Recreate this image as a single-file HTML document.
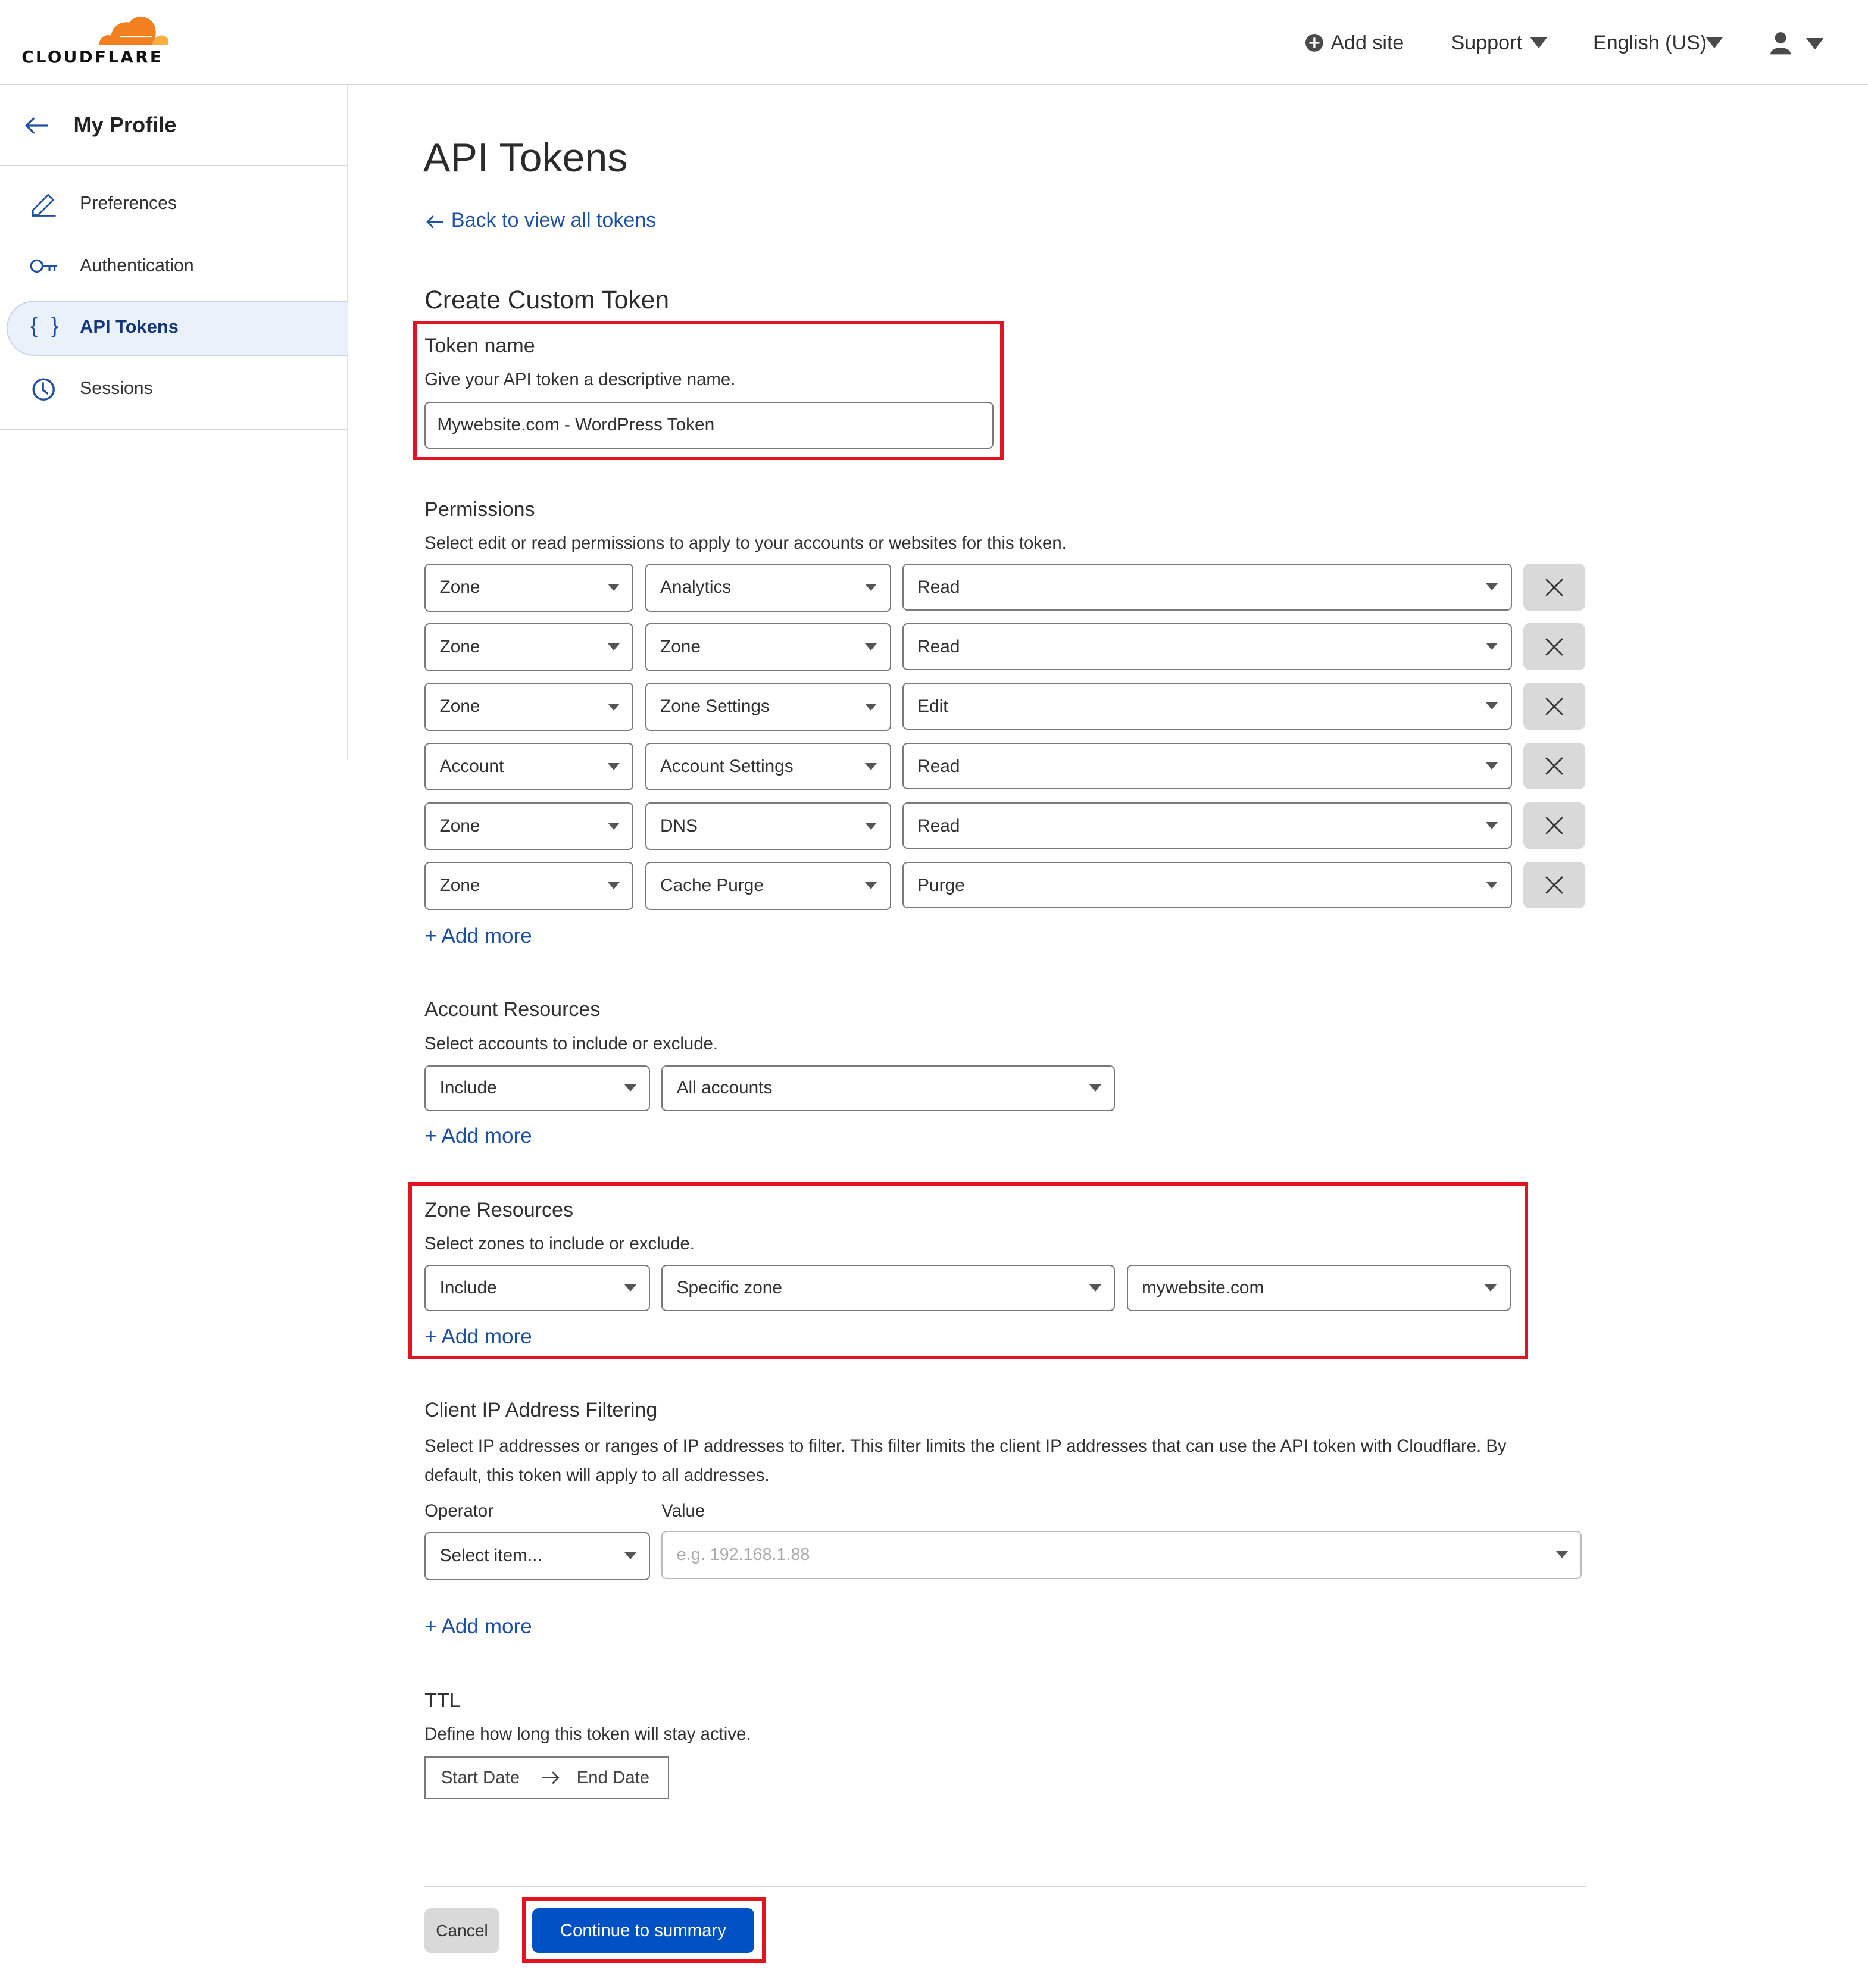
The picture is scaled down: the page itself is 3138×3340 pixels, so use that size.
<!DOCTYPE html>
<html><head><meta charset="utf-8"><style>
html,body{margin:0;padding:0;background:#fff}
body{width:3138px;height:3339px;overflow:hidden;position:relative}
#r{position:absolute;left:0;top:1px;width:1474px;height:1568px;zoom:2.12890;font-family:"Liberation Sans",sans-serif;color:#313131}
.t{position:absolute;white-space:nowrap;line-height:20px}
.box{position:absolute;box-sizing:border-box}
.sel{position:absolute;box-sizing:border-box;border:1px solid #7a7a7a;border-radius:4px;background:#fff;font-size:14px;color:#313131;line-height:36px;padding-left:11px;white-space:nowrap}
.sel::after{content:"";position:absolute;right:10px;top:50%;margin-top:-3px;border-left:5px solid transparent;border-right:5px solid transparent;border-top:6px solid #555}
.sel.nc::after{display:none}
.x{position:absolute;width:49px;height:37px;background:#d9d9d9;border-radius:5px}
.x svg{position:absolute;left:17px;top:11px}
.red{position:absolute;box-sizing:border-box;border:3px solid #e3141f}
.lbl{font-size:16px;color:#313131}
.desc{font-size:13.8px;color:#313131}
.add{font-size:16.5px;color:#1d4fa3}
</style></head><body><div id="r">

<!-- header -->
<svg class="box" style="left:74px;top:9px" width="60" height="28" viewBox="0 0 58 26">
<path d="M4 24 C4 18 9 16 13 17 C14 10 20 6 27 7 C31 1 42 1 46 9 C48 14 47 19 45 24 Z" fill="#f38020"/>
<path d="M44 24 C46 17 52 15 56 19 C57 21 57 23 56 24 Z" fill="#faae40"/>
<path d="M20 18 H44" stroke="#fff" stroke-width="1.2"/>
</svg>
<div class="t" style="left:17px;top:34px;font-size:13px;font-weight:bold;letter-spacing:1.6px;color:#111;font-family:'DejaVu Sans',sans-serif">CLOUDFLARE</div>

<svg class="box" style="left:1030px;top:26px" width="14" height="14"><circle cx="7" cy="7" r="7" fill="#4a4a4a"/><path d="M7 3v8M3 7h8" stroke="#fff" stroke-width="1.6"/></svg>
<div class="t" style="left:1050px;top:23px;font-size:16px">Add site</div>
<div class="t" style="left:1145px;top:23px;font-size:16px">Support</div>
<svg class="box" style="left:1207px;top:28px" width="14" height="10"><path d="M0 0h14L7 9z" fill="#4a4a4a"/></svg>
<div class="t" style="left:1257px;top:23px;font-size:16px">English (US)</div>
<svg class="box" style="left:1346px;top:28px" width="14" height="10"><path d="M0 0h14L7 9z" fill="#4a4a4a"/></svg>
<svg class="box" style="left:1396px;top:24px" width="18" height="19"><circle cx="9" cy="5" r="4.5" fill="#4a4a4a"/><path d="M1 18 C1 11 17 11 17 18Z" fill="#4a4a4a"/></svg>
<svg class="box" style="left:1425px;top:29px" width="14" height="10"><path d="M0 0h14L7 9z" fill="#4a4a4a"/></svg>
<div class="box" style="left:0;top:65px;width:1474px;height:1px;background:#d5d5d5"></div>

<!-- sidebar -->
<div class="box" style="left:274px;top:66px;width:1px;height:533px;background:#e0e0e0"></div>
<svg class="box" style="left:19px;top:90px" width="20" height="16"><path d="M19 8H2M8 2L2 8l6 6" stroke="#1d4fa3" stroke-width="1.5" fill="none"/></svg>
<div class="t" style="left:58px;top:88px;font-size:17px;font-weight:bold;color:#222">My Profile</div>
<div class="box" style="left:0;top:129px;width:274px;height:1px;background:#d5d5d5"></div>
<svg class="box" style="left:24px;top:150px" width="22" height="20"><path d="M2 15 L14 3 L18 7 L6 19 H2Z" stroke="#1d4fa3" stroke-width="1.3" fill="none"/><path d="M1 19.5H20" stroke="#1d4fa3" stroke-width="1.3"/></svg>
<div class="t" style="left:63px;top:150px;font-size:14.2px">Preferences</div>
<svg class="box" style="left:23px;top:202px" width="24" height="14"><circle cx="6" cy="7" r="4.5" stroke="#1d4fa3" stroke-width="1.5" fill="none"/><path d="M10.5 7H22M16 7v4M20 7v4" stroke="#1d4fa3" stroke-width="1.5"/></svg>
<div class="t" style="left:63px;top:199px;font-size:14.2px">Authentication</div>
<div class="box" style="left:5px;top:236px;width:270px;height:44px;background:#eaf1fb;border:1px solid #c8d6ea;border-right:none;border-radius:22px 0 0 22px"></div>
<div class="t" style="left:24px;top:246px;font-size:17px;color:#1d4fa3;letter-spacing:3px">{ }</div>
<div class="t" style="left:63px;top:247px;font-size:14.5px;font-weight:bold;color:#14367a">API Tokens</div>
<svg class="box" style="left:25px;top:297px" width="19" height="19"><circle cx="9.5" cy="9.5" r="8" stroke="#1d4fa3" stroke-width="1.6" fill="none"/><path d="M9 4v6l4 3" stroke="#1d4fa3" stroke-width="1.6" fill="none"/></svg>
<div class="t" style="left:63px;top:296px;font-size:14.2px">Sessions</div>
<div class="box" style="left:0;top:337px;width:274px;height:1px;background:#d5d5d5"></div>

<!-- main -->
<div class="t" style="left:334px;top:102px;font-size:32px;line-height:44px;color:#2b2b2b">API Tokens</div>
<svg class="box" style="left:336px;top:168px" width="15" height="12"><path d="M14 6H2M6 1.5L1.5 6 6 10.5" stroke="#1d4fa3" stroke-width="1.3" fill="none"/></svg>
<div class="t" style="left:356px;top:163px;font-size:16px;color:#1d4fa3">Back to view all tokens</div>
<div class="t" style="left:335px;top:224px;font-size:20px;line-height:24px;color:#2b2b2b">Create Custom Token</div>

<div class="red" style="left:326px;top:252px;width:466px;height:110px"></div>
<div class="t lbl" style="left:335px;top:262px">Token name</div>
<div class="t desc" style="left:335px;top:289px">Give your API token a descriptive name.</div>
<div class="sel nc" style="left:335px;top:316px;width:449px;height:37px;line-height:35px;padding-left:9px">Mywebsite.com - WordPress Token</div>

<div class="t lbl" style="left:335px;top:391px">Permissions</div>
<div class="t desc" style="left:335px;top:418px">Select edit or read permissions to apply to your accounts or websites for this token.</div>

<div class="sel" style="left:335px;top:444px;width:165px;height:38px">Zone</div>
<div class="sel" style="left:509px;top:444px;width:194px;height:38px">Analytics</div>
<div class="sel" style="left:712px;top:444px;width:481px;height:37px">Read</div>
<div class="x" style="left:1202px;top:444px"><svg width="15" height="15"><path d="M1 1l13 13M14 1L1 14" stroke="#333" stroke-width="1.3"/></svg></div>

<div class="sel" style="left:335px;top:491px;width:165px;height:38px">Zone</div>
<div class="sel" style="left:509px;top:491px;width:194px;height:38px">Zone</div>
<div class="sel" style="left:712px;top:491px;width:481px;height:37px">Read</div>
<div class="x" style="left:1202px;top:491px"><svg width="15" height="15"><path d="M1 1l13 13M14 1L1 14" stroke="#333" stroke-width="1.3"/></svg></div>

<div class="sel" style="left:335px;top:538px;width:165px;height:38px">Zone</div>
<div class="sel" style="left:509px;top:538px;width:194px;height:38px">Zone Settings</div>
<div class="sel" style="left:712px;top:538px;width:481px;height:37px">Edit</div>
<div class="x" style="left:1202px;top:538px"><svg width="15" height="15"><path d="M1 1l13 13M14 1L1 14" stroke="#333" stroke-width="1.3"/></svg></div>

<div class="sel" style="left:335px;top:585px;width:165px;height:38px">Account</div>
<div class="sel" style="left:509px;top:585px;width:194px;height:38px">Account Settings</div>
<div class="sel" style="left:712px;top:585px;width:481px;height:37px">Read</div>
<div class="x" style="left:1202px;top:585px"><svg width="15" height="15"><path d="M1 1l13 13M14 1L1 14" stroke="#333" stroke-width="1.3"/></svg></div>

<div class="sel" style="left:335px;top:632px;width:165px;height:38px">Zone</div>
<div class="sel" style="left:509px;top:632px;width:194px;height:38px">DNS</div>
<div class="sel" style="left:712px;top:632px;width:481px;height:37px">Read</div>
<div class="x" style="left:1202px;top:632px"><svg width="15" height="15"><path d="M1 1l13 13M14 1L1 14" stroke="#333" stroke-width="1.3"/></svg></div>

<div class="sel" style="left:335px;top:679px;width:165px;height:38px">Zone</div>
<div class="sel" style="left:509px;top:679px;width:194px;height:38px">Cache Purge</div>
<div class="sel" style="left:712px;top:679px;width:481px;height:37px">Purge</div>
<div class="x" style="left:1202px;top:679px"><svg width="15" height="15"><path d="M1 1l13 13M14 1L1 14" stroke="#333" stroke-width="1.3"/></svg></div>

<div class="t add" style="left:335px;top:728px">+ Add more</div>

<div class="t lbl" style="left:335px;top:786px">Account Resources</div>
<div class="t desc" style="left:335px;top:813px">Select accounts to include or exclude.</div>
<div class="sel" style="left:335px;top:840px;width:178px;height:36px;line-height:34px">Include</div>
<div class="sel" style="left:522px;top:840px;width:358px;height:36px;line-height:34px">All accounts</div>
<div class="t add" style="left:335px;top:886px">+ Add more</div>

<div class="red" style="left:322px;top:932px;width:884px;height:140px"></div>
<div class="t lbl" style="left:335px;top:944px">Zone Resources</div>
<div class="t desc" style="left:335px;top:971px">Select zones to include or exclude.</div>
<div class="sel" style="left:335px;top:997px;width:178px;height:37px;line-height:35px">Include</div>
<div class="sel" style="left:522px;top:997px;width:358px;height:37px;line-height:35px">Specific zone</div>
<div class="sel" style="left:889px;top:997px;width:303px;height:37px;line-height:35px">mywebsite.com</div>
<div class="t add" style="left:335px;top:1044px">+ Add more</div>

<div class="t lbl" style="left:335px;top:1102px">Client IP Address Filtering</div>
<div class="t desc" style="left:335px;top:1129px;line-height:23px">Select IP addresses or ranges of IP addresses to filter. This filter limits the client IP addresses that can use the API token with Cloudflare. By<br>default, this token will apply to all addresses.</div>
<div class="t desc" style="left:335px;top:1182px">Operator</div>
<div class="t desc" style="left:522px;top:1182px">Value</div>
<div class="sel" style="left:335px;top:1208px;width:178px;height:38px">Select item...</div>
<div class="sel" style="left:522px;top:1207px;width:726px;height:38px;border-color:#bbb;color:#aaa;font-size:13.5px">e.g. 192.168.1.88</div>
<div class="t add" style="left:335px;top:1273px">+ Add more</div>

<div class="t lbl" style="left:335px;top:1331px">TTL</div>
<div class="t desc" style="left:335px;top:1358px">Define how long this token will stay active.</div>
<div class="box" style="left:335px;top:1385px;width:193px;height:34px;border:1px solid #7a7a7a"></div>
<div class="t desc" style="left:348px;top:1392px;color:#444">Start Date</div>
<svg class="box" style="left:427px;top:1396px" width="15" height="12"><path d="M1 6h12M9 1.5L13.5 6 9 10.5" stroke="#444" stroke-width="1.2" fill="none"/></svg>
<div class="t desc" style="left:455px;top:1392px;color:#444">End Date</div>

<div class="box" style="left:335px;top:1487px;width:917px;height:1px;background:#d5d5d5"></div>
<div class="box" style="left:335px;top:1505px;width:59px;height:35px;background:#d9d9d9;border-radius:5px"></div>
<div class="t" style="left:335px;width:59px;text-align:center;top:1513px;font-size:13.2px;color:#333">Cancel</div>
<div class="red" style="left:412px;top:1496px;width:192px;height:52px"></div>
<div class="box" style="left:420px;top:1505px;width:175px;height:35px;background:#0051c3;border-radius:5px"></div>
<div class="t desc" style="left:420px;width:175px;text-align:center;top:1513px;color:#fff">Continue to summary</div>

</div></body></html>
